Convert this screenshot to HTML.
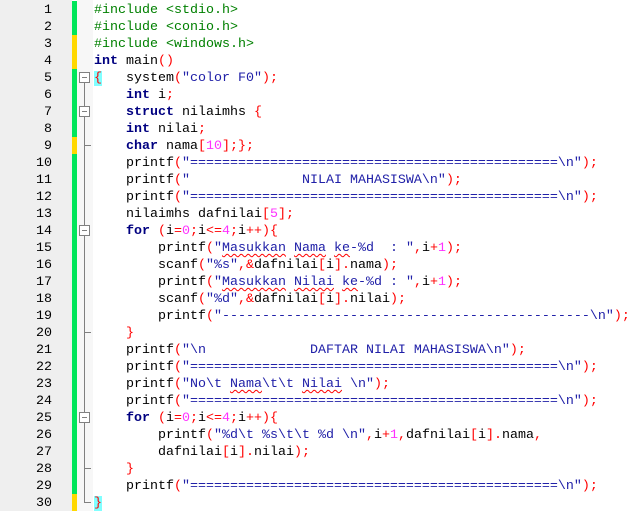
<!DOCTYPE html>
<html><head><meta charset="utf-8"><style>
html,body{margin:0;padding:0;width:629px;height:511px;overflow:hidden;background:#fff;}
.gut{position:absolute;left:0;top:0;width:72px;height:511px;background:#efefef;}
.fold{position:absolute;left:77px;top:0;width:16px;height:511px;background:#f7f7f7;}
.bar{position:absolute;left:72px;width:5px;height:17px;}
.g{background:#00e65a}.y{background:#ffd800}
.ln{position:absolute;left:0;width:52px;text-align:right;font:13.33px "Liberation Mono",monospace;color:#000;height:17px;line-height:17px;margin-top:1px;}
.l{position:absolute;left:94px;white-space:pre;font:13.33px "Liberation Mono",monospace;height:17px;line-height:17px;color:#000;margin-top:1px;}
.k{color:#000080;font-weight:bold}
.p{color:#008000}
.s{color:#2020a8}
.o{color:#ff0000}
.n{color:#ff30ff}
.w{text-decoration:underline wavy #ff0000;text-decoration-thickness:1px;text-underline-offset:2px}
.hb{background:#80ffff}
.box{position:absolute;left:79px;width:11px;height:11px;border:1px solid #808080;background:#fff;box-sizing:border-box;}
.box:after{content:"";position:absolute;left:2px;top:4px;width:5px;height:1px;background:#808080;}
.vl{position:absolute;left:84px;width:1px;background:#808080;}
.tk{position:absolute;left:84px;width:7px;height:1px;background:#808080;}
</style></head><body>
<div class="gut"></div><div class="fold"></div>
<div class="bar g" style="top:1px;height:34px"></div>
<div class="bar y" style="top:35px;height:34px"></div>
<div class="bar g" style="top:69px;height:68px"></div>
<div class="bar y" style="top:137px;height:17px"></div>
<div class="bar g" style="top:154px;height:340px"></div>
<div class="bar y" style="top:494px;height:17px"></div>
<div class="vl" style="top:81px;height:422px"></div>
<div class="tk" style="top:145px"></div>
<div class="tk" style="top:332px"></div>
<div class="tk" style="top:468px"></div>
<div class="tk" style="top:502px"></div>
<div class="box" style="top:72px"></div>
<div class="box" style="top:106px"></div>
<div class="box" style="top:225px"></div>
<div class="box" style="top:412px"></div>

<div class="ln" style="top:1px">1</div><div class="ln" style="top:18px">2</div><div class="ln" style="top:35px">3</div><div class="ln" style="top:52px">4</div><div class="ln" style="top:69px">5</div><div class="ln" style="top:86px">6</div><div class="ln" style="top:103px">7</div><div class="ln" style="top:120px">8</div><div class="ln" style="top:137px">9</div><div class="ln" style="top:154px">10</div><div class="ln" style="top:171px">11</div><div class="ln" style="top:188px">12</div><div class="ln" style="top:205px">13</div><div class="ln" style="top:222px">14</div><div class="ln" style="top:239px">15</div><div class="ln" style="top:256px">16</div><div class="ln" style="top:273px">17</div><div class="ln" style="top:290px">18</div><div class="ln" style="top:307px">19</div><div class="ln" style="top:324px">20</div><div class="ln" style="top:341px">21</div><div class="ln" style="top:358px">22</div><div class="ln" style="top:375px">23</div><div class="ln" style="top:392px">24</div><div class="ln" style="top:409px">25</div><div class="ln" style="top:426px">26</div><div class="ln" style="top:443px">27</div><div class="ln" style="top:460px">28</div><div class="ln" style="top:477px">29</div><div class="ln" style="top:494px">30</div>

<div class="l p" style="top:1px">#include &lt;stdio.h&gt;</div>
<div class="l p" style="top:18px">#include &lt;conio.h&gt;</div>
<div class="l p" style="top:35px">#include &lt;windows.h&gt;</div>
<div class="l" style="top:52px"><span class="k">int</span> main<span class="o">()</span></div>
<div class="l" style="top:69px"><span class="o hb">{</span>   system<span class="o">(</span><span class="s">"color F0"</span><span class="o">);</span></div>
<div class="l" style="top:86px">    <span class="k">int</span> i<span class="o">;</span></div>
<div class="l" style="top:103px">    <span class="k">struct</span> nilaimhs <span class="o">{</span></div>
<div class="l" style="top:120px">    <span class="k">int</span> nilai<span class="o">;</span></div>
<div class="l" style="top:137px">    <span class="k">char</span> nama<span class="o">[</span><span class="n">10</span><span class="o">];};</span></div>
<div class="l" style="top:154px">    printf<span class="o">(</span><span class="s">"==============================================\n"</span><span class="o">);</span></div>
<div class="l" style="top:171px">    printf<span class="o">(</span><span class="s">"              NILAI MAHASISWA\n"</span><span class="o">);</span></div>
<div class="l" style="top:188px">    printf<span class="o">(</span><span class="s">"==============================================\n"</span><span class="o">);</span></div>
<div class="l" style="top:205px">    nilaimhs dafnilai<span class="o">[</span><span class="n">5</span><span class="o">];</span></div>
<div class="l" style="top:222px">    <span class="k">for</span> <span class="o">(</span>i<span class="o">=</span><span class="n">0</span><span class="o">;</span>i<span class="o">&lt;=</span><span class="n">4</span><span class="o">;</span>i<span class="o">++){</span></div>
<div class="l" style="top:239px">        printf<span class="o">(</span><span class="s">"<span class="w">Masukkan</span> <span class="w">Nama</span> <span class="w">ke</span>-%d  : "</span><span class="o">,</span>i<span class="o">+</span><span class="n">1</span><span class="o">);</span></div>
<div class="l" style="top:256px">        scanf<span class="o">(</span><span class="s">"%s"</span><span class="o">,&amp;</span>dafnilai<span class="o">[</span>i<span class="o">].</span>nama<span class="o">);</span></div>
<div class="l" style="top:273px">        printf<span class="o">(</span><span class="s">"<span class="w">Masukkan</span> <span class="w">Nilai</span> <span class="w">ke</span>-%d : "</span><span class="o">,</span>i<span class="o">+</span><span class="n">1</span><span class="o">);</span></div>
<div class="l" style="top:290px">        scanf<span class="o">(</span><span class="s">"%d"</span><span class="o">,&amp;</span>dafnilai<span class="o">[</span>i<span class="o">].</span>nilai<span class="o">);</span></div>
<div class="l" style="top:307px">        printf<span class="o">(</span><span class="s">"----------------------------------------------\n"</span><span class="o">);</span></div>
<div class="l" style="top:324px">    <span class="o">}</span></div>
<div class="l" style="top:341px">    printf<span class="o">(</span><span class="s">"\n             DAFTAR NILAI MAHASISWA\n"</span><span class="o">);</span></div>
<div class="l" style="top:358px">    printf<span class="o">(</span><span class="s">"==============================================\n"</span><span class="o">);</span></div>
<div class="l" style="top:375px">    printf<span class="o">(</span><span class="s">"No\t <span class="w">Nama</span>\t\t <span class="w">Nilai</span> \n"</span><span class="o">);</span></div>
<div class="l" style="top:392px">    printf<span class="o">(</span><span class="s">"==============================================\n"</span><span class="o">);</span></div>
<div class="l" style="top:409px">    <span class="k">for</span> <span class="o">(</span>i<span class="o">=</span><span class="n">0</span><span class="o">;</span>i<span class="o">&lt;=</span><span class="n">4</span><span class="o">;</span>i<span class="o">++){</span></div>
<div class="l" style="top:426px">        printf<span class="o">(</span><span class="s">"%d\t %s\t\t %d \n"</span><span class="o">,</span>i<span class="o">+</span><span class="n">1</span><span class="o">,</span>dafnilai<span class="o">[</span>i<span class="o">].</span>nama<span class="o">,</span></div>
<div class="l" style="top:443px">        dafnilai<span class="o">[</span>i<span class="o">].</span>nilai<span class="o">);</span></div>
<div class="l" style="top:460px">    <span class="o">}</span></div>
<div class="l" style="top:477px">    printf<span class="o">(</span><span class="s">"==============================================\n"</span><span class="o">);</span></div>
<div class="l" style="top:494px"><span class="o hb">}</span></div>
</body></html>
